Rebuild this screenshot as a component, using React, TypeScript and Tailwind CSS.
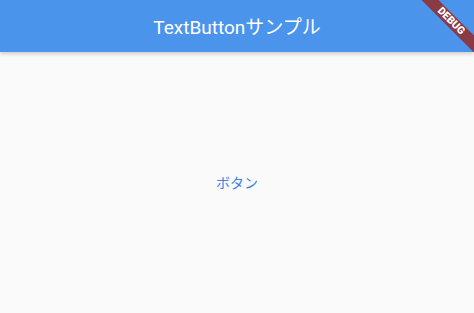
export default function App() {
  return (
    <div
      className="relative h-[313px] w-[474px] overflow-hidden flex flex-col bg-[#fafafa]"
      style={{ fontFamily: 'Roboto, "Noto Sans CJK JP", sans-serif' }}
    >
      {/* App bar */}
      <header className="shrink-0 h-[52px] bg-[#4a94ec] flex items-center justify-center pt-[2px] shadow-[0_2px_4px_rgba(0,0,0,0.18)] z-10">
        <span className="text-white text-[19px] leading-none">TextButtonサンプル</span>
      </header>

      {/* Body */}
      <main className="flex-1 flex items-center justify-center">
        <button className="px-2 py-2 text-[14px] leading-none text-[#3b86dc] rounded">ボタン</button>
      </main>

      {/* Debug banner */}
      <div className="absolute top-[15px] left-[391px] w-[120px] h-[12px] rotate-45 bg-[#8a3a44] flex items-center justify-center z-20">
        <span className="text-white text-[10.5px] font-black leading-none">DEBUG</span>
      </div>
    </div>
  );
}
